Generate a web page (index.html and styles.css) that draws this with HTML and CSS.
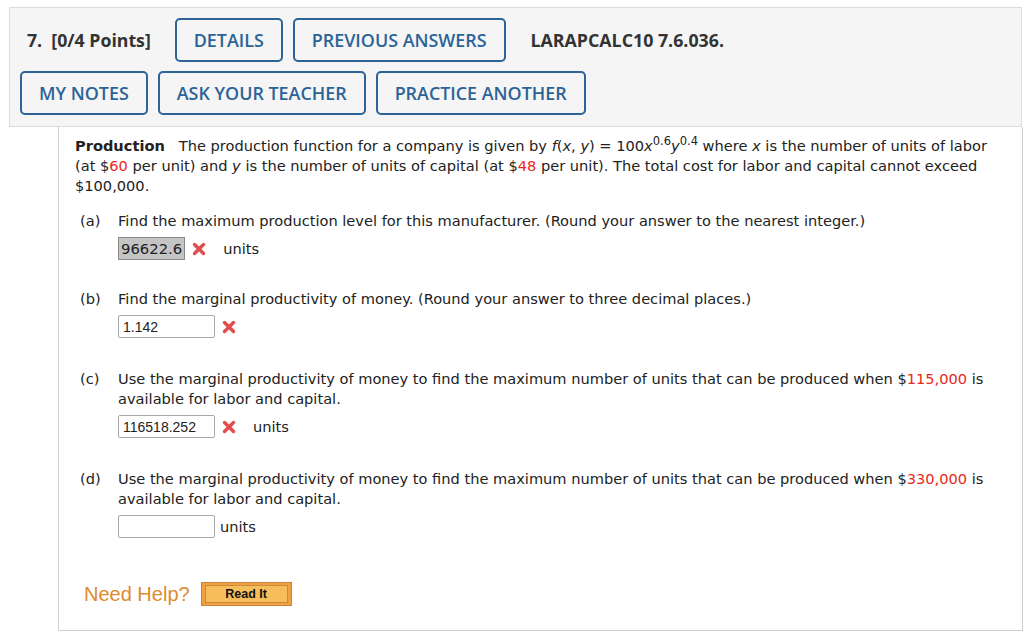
FILE: index.html
```html
<!DOCTYPE html>
<html>
<head>
<meta charset="utf-8">
<link rel="stylesheet" href="styles.css">
</head>
<body>
<div class="header">
  <div class="row row1">
    <span class="qnum">7.&nbsp; [0/4 Points]</span>
    <span class="btn">DETAILS</span>
    <span class="btn">PREVIOUS ANSWERS</span>
    <span class="ref">LARAPCALC10 7.6.036.</span>
  </div>
  <div class="row row2">
    <span class="btn">MY NOTES</span>
    <span class="btn">ASK YOUR TEACHER</span>
    <span class="btn">PRACTICE ANOTHER</span>
  </div>
</div>
<div class="panel">
  <p class="intro"><b>Production</b>&nbsp;&nbsp; The production function for a company is given by <i>f</i>(<i>x</i>, <i>y</i>) = 100<i>x</i><sup>0.6</sup><i>y</i><sup>0.4</sup> where <i>x</i> is the number of units of labor (at $<span class="red">60</span> per unit) and <i>y</i> is the number of units of capital (at $<span class="red">48</span> per unit). The total cost for labor and capital cannot exceed $100,000.</p>

  <div class="part part-a">
    <div class="q"><span class="lbl">(a)</span><span class="qt">Find the maximum production level for this manufacturer. (Round your answer to the nearest integer.)</span></div>
    <div class="ans"><span class="box graded">96622.6</span><svg class="xm" viewBox="0 0 14 14"><path d="M2.5 2.5 L11.5 11.5 M11.5 2.5 L2.5 11.5"/></svg><span class="units u-after-x">units</span></div>
  </div>

  <div class="part part-b">
    <div class="q"><span class="lbl">(b)</span><span class="qt">Find the marginal productivity of money. (Round your answer to three decimal places.)</span></div>
    <div class="ans"><span class="box field">1.142</span><svg class="xm" viewBox="0 0 14 14"><path d="M2.5 2.5 L11.5 11.5 M11.5 2.5 L2.5 11.5"/></svg></div>
  </div>

  <div class="part part-c">
    <div class="q"><span class="lbl">(c)</span><span class="qt">Use the marginal productivity of money to find the maximum number of units that can be produced when $<span class="red">115,000</span> is available for labor and capital.</span></div>
    <div class="ans"><span class="box field">116518.252</span><svg class="xm" viewBox="0 0 14 14"><path d="M2.5 2.5 L11.5 11.5 M11.5 2.5 L2.5 11.5"/></svg><span class="units u-after-x">units</span></div>
  </div>

  <div class="part part-d">
    <div class="q"><span class="lbl">(d)</span><span class="qt">Use the marginal productivity of money to find the maximum number of units that can be produced when $<span class="red">330,000</span> is available for labor and capital.</span></div>
    <div class="ans"><span class="box field"></span><span class="units u-plain">units</span></div>
  </div>

  <div class="help">
    <span class="need">Need Help?</span>
    <span class="readit"><span class="readit-in">Read It</span></span>
  </div>
</div>
</body>
</html>
```
FILE: styles.css
```css
* { box-sizing: border-box; }
body {
  margin: 0;
  background: #fff;
  font-family: "DejaVu Sans", Verdana, sans-serif;
  color: #222;
}
.header {
  margin: 7px 2px 0 9px;
  width: 1013px;
  height: 120px;
  background: #f5f5f5;
  border: 1px solid #dcdcdc;
  padding: 10px 10px 0 10px;
  font-family: "Open Sans", sans-serif;
}
.row {
  display: flex;
  align-items: center;
  height: 44px;
}
.row1 { padding-left: 7px; }
.row2 { margin-top: 9px; gap: 10px; }
.qnum {
  font-weight: 700;
  font-size: 17.7px;
  color: #333;
  margin-right: 24px;
}
.btn {
  display: flex;
  align-items: center;
  height: 44px;
  padding: 0 17px;
  border: 2px solid #2d6396;
  border-radius: 5px;
  color: #2b6397;
  font-weight: 600;
  font-size: 17.9px;
  background: #f5f5f5;
}
.row1 .btn + .btn { margin-left: 10px; }
.ref {
  margin-left: 25px;
  font-weight: 700;
  font-size: 17.8px;
  color: #333;
}
.panel {
  margin-left: 58px;
  width: 965px;
  height: 504px;
  border: 1px solid #cfcfcf;
  border-top: none;
  padding: 9px 18px 0 16px;
  font-size: 14.6px;
  line-height: 20px;
}
.intro { margin: 0; }
.intro b { font-weight: 700; }
sup {
  font-size: 11.5px;
  line-height: 0;
  vertical-align: 6px;
}
.red { color: #e8291c; }
.part { padding-left: 5px; }
.part-a { margin-top: 15px; }
.part-b { margin-top: 29px; }
.part-c { margin-top: 31px; }
.part-d { margin-top: 31px; }
.q { display: flex; }
.lbl { width: 38px; flex: none; }
.qt { flex: 1; }
.ans {
  display: flex;
  align-items: center;
  margin: 6px 0 0 38px;
  height: 23px;
}
.box {
  display: flex;
  align-items: center;
  height: 23px;
}
.graded {
  padding: 0 2px 0 2px;
  background: #c4c4c4;
  border: 1px solid #8a8a8a;
  font-family: "DejaVu Sans", Verdana, sans-serif;
  font-size: 14.8px;
}
.field {
  width: 97px;
  padding: 0 4px;
  background: #fff;
  border: 1px solid #a8a8a8;
  border-radius: 2px;
  font-family: "Liberation Sans", Arial, sans-serif;
  font-size: 14px;
  color: #222;
}
.xm {
  width: 14px;
  height: 14px;
  margin-left: 7px;
}
.xm path {
  stroke: #e34c4c;
  stroke-width: 3.4;
  stroke-linecap: round;
  fill: none;
}
.u-after-x { margin-left: 17px; }
.u-plain { margin-left: 5px; }
.help {
  display: flex;
  align-items: center;
  margin-top: 44px;
  padding-left: 9px;
  gap: 11px;
}
.need {
  font-family: "Liberation Sans", Arial, sans-serif;
  font-size: 20px;
  color: #e08a2e;
}
.readit {
  display: flex;
  width: 91px;
  height: 24px;
  padding: 2px 3px;
  background: #f0a040;
  border: 1px solid #c9853e;
}
.readit-in {
  flex: 1;
  display: flex;
  align-items: center;
  justify-content: center;
  background: #f5be5a;
  border: 1px solid #c98a3a;
  font-family: "Liberation Sans", Arial, sans-serif;
  font-weight: 700;
  font-size: 12.5px;
  color: #111;
}
```
